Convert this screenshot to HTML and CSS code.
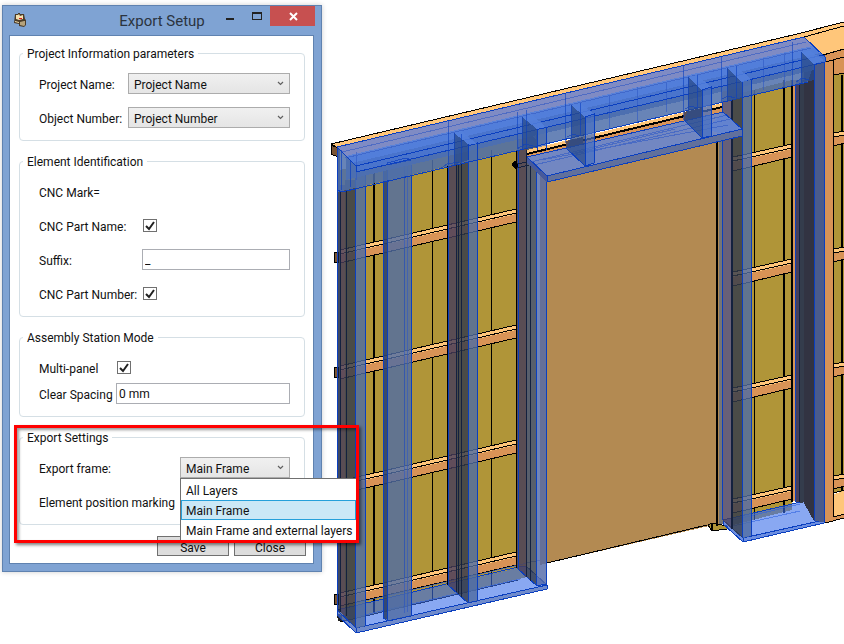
FILE: index.html
```
<!DOCTYPE html>
<html lang="en">
<head>
    <meta charset="UTF-8">
    <title>Export Setup</title>
    <link rel="stylesheet" href="styles.css">
</head>
<body>
    <main class="dialog">
        <header class="titlebar">
            <svg class="app-icon" viewBox="0 0 12 14" width="12" height="14">
                <path d="M1 1h3V0h2v1h4l1 5 1 1v5l-2 2-5-1v-2l-5-1z" fill="#4a3b28"/>
                <path d="M2 2h2l1-1 1 2 3-1v4l-4 1-3-1zM1 8l4 1v1L1 9z" fill="#f3dfae"/>
                <path d="M6 9l4-1h1v4l-1 1-4-1z" fill="#b5a27c"/>
                <path d="M5 5h3v1H5z" fill="#e01818"/>
            </svg>
            <h1>Export Setup</h1>
            <div class="window-controls">
                <button type="button" class="win-btn" aria-label="Minimize">
                    <svg viewBox="0 0 12 12" width="12" height="12"><path d="M2 8h8v2H2z" fill="#222"/></svg>
                </button>
                <button type="button" class="win-btn" aria-label="Maximize">
                    <svg viewBox="0 0 12 12" width="12" height="12"><path d="M1 2h10v8H1zM2 4v5h8V4z" fill="#222" fill-rule="evenodd"/></svg>
                </button>
                <button type="button" class="win-btn close" aria-label="Close window">
                    <svg viewBox="0 0 12 12" width="12" height="12"><path d="M3 3l7 7M10 3l-7 7" stroke="#fff" stroke-width="2"/></svg>
                </button>
            </div>
        </header>

        <form class="content">
            <fieldset class="project">
                <legend>Project Information parameters</legend>
                <div class="row">
                    <label for="projectName">Project Name:</label>
                    <select id="projectName"><option>Project Name</option></select>
                </div>
                <div class="row">
                    <label for="objectNumber">Object Number:</label>
                    <select id="objectNumber"><option>Project Number</option></select>
                </div>
            </fieldset>

            <fieldset class="element">
                <legend>Element Identification</legend>
                <div class="row"><span>CNC Mark=</span></div>
                <div class="row">
                    <label for="partName">CNC Part Name:</label>
                    <input type="checkbox" id="partName" checked>
                </div>
                <div class="row">
                    <label for="suffix">Suffix:</label>
                    <input type="text" id="suffix" value="_">
                </div>
                <div class="row">
                    <label for="partNumber">CNC Part Number:</label>
                    <input type="checkbox" id="partNumber" checked>
                </div>
            </fieldset>

            <fieldset class="assembly">
                <legend>Assembly Station Mode</legend>
                <div class="row">
                    <label for="multiPanel">Multi-panel</label>
                    <input type="checkbox" id="multiPanel" checked>
                </div>
                <div class="row">
                    <label for="clearSpacing">Clear Spacing</label>
                    <input type="text" id="clearSpacing" value="0 mm">
                </div>
            </fieldset>

            <div class="export-area">
                <fieldset class="export">
                    <legend>Export Settings</legend>
                    <div class="row">
                        <label for="exportFrame">Export frame:</label>
                        <div class="combo">
                            <select id="exportFrame"><option>Main Frame</option></select>
                            <ul class="menu" role="listbox">
                                <li role="option">All Layers</li>
                                <li role="option" class="selected" aria-selected="true">Main Frame</li>
                                <li role="option">Main Frame and external layers</li>
                            </ul>
                        </div>
                    </div>
                    <div class="row"><span>Element position marking</span></div>
                </fieldset>
                <div class="highlight"></div>
            </div>

            <div class="actions">
                <button type="button">Save</button>
                <button type="button">Close</button>
            </div>
        </form>
    </main>

    <svg class="model" viewBox="330 0 514 644" role="img" aria-label="Wall frame model">
        <defs>
            <g id="batten">
                <path class="light" d="M340 250L516 209V214L340 255z"/>
                <path class="wood" d="M340 255L516 214V222L340 263z"/>
                <path class="ink" d="M340 250L516 209M340 254L516 213M340 263L516 222"/>
            </g>
            <g id="batten-r">
                <path class="light" d="M733 157L792 144V149L733 162z"/>
                <path class="wood" d="M733 162L792 149V157L733 171z"/>
                <path class="ink" d="M733 157L792 144M733 161L792 148M733 171L792 157"/>
            </g>
            <g id="batten-far">
                <path class="light" d="M834 133L844 131V135L834 137z"/>
                <path class="wood" d="M834 137L844 135V143L834 146z"/>
                <path class="ink" d="M834 133L844 131M834 137L844 135M834 146L844 143"/>
            </g>
        </defs>

        <!-- left wall sheathing -->
        <path class="sheath" d="M340 170L527 130V577L340 622z"/>
        <path class="ink thick" d="M374 170V613"/>
        <path class="ink" d="M404 170V607M432 160V600M491 150V587M340 622L518 580"/>
        <use href="#batten"/>
        <use href="#batten" y="116"/>
        <use href="#batten" y="231"/>
        <use href="#batten" y="343"/>
        <path class="nub" d="M334 252h4v10h-4zM334 367h4v10h-4zM334 594h4v10h-4z"/>
        <path d="M337 614l5 1v6h-4z" fill="#222"/>

        <!-- door panel -->
        <path class="panel" d="M540 150L722 110V523L540 565z"/>
        <path class="ink" d="M547 563L707 525"/>
        <path class="sheath outlined" d="M708 525L712 523L727 526V529L712 531z"/>
        <path class="ink thick" d="M712 524V531M717 130V526"/>
        <path d="M719 132h4v392h-4z" fill="#757575"/>

        <!-- right wall sheathing -->
        <path class="sheath" d="M733 95L792 80V510L733 525z"/>
        <path class="ink" d="M754 90V520"/>
        <path class="ink thick" d="M784 80V513"/>
        <use href="#batten-r"/>
        <use href="#batten-r" y="115"/>
        <use href="#batten-r" y="231"/>
        <use href="#batten-r" y="342"/>
        <path class="ink thick" d="M792 80V502"/>
        <path class="wood" d="M793 80h3v421h-3z"/>

        <!-- far right wall -->
        <path class="sheath" d="M834 70h10v422h-10z"/>
        <path class="ink thick" d="M842 75V490"/>
        <use href="#batten-far"/>
        <use href="#batten-far" y="116"/>
        <use href="#batten-far" y="231"/>
        <use href="#batten-far" y="343"/>
        <path class="light" d="M834 494L844 491V514L834 517z"/>
        <path class="wood" d="M823 55L844 49V73L834 75V517L844 514V518L825 523z"/>
        <path class="ink" d="M833 60V517M834 75L844 73M825 62L844 57M834 493L844 490M834 517L844 514M825 523L844 518"/>
        <path class="light outlined" d="M804 37L844 26V49L823 55z"/>

        <!-- top cap -->
        <path class="light outlined" d="M331 144L797 34L844 22V26L804 37L338 148z"/>
        <path class="nub" d="M331 145L338 148V157L331 154z"/>

        <!-- bottom plates -->
        <path class="plate" d="M337 610L526 566L547 585V589L356 633L337 615z"/>
        <path class="plate-edge" d="M337 610L356 628L547 585V589L356 633L337 615zM723 520L743 538L824 520V523L743 542L723 524z"/>
        <path class="blue" d="M337 610L518 567L526 566L547 585L356 628zM337 610V615L356 633L547 589V585M356 628V633"/>
        <path class="hidden" d="M356 603L540 560M360 616L520 579"/>
        <path class="plate" d="M723 520L805 501L824 520V523L743 542L723 524z"/>
        <path class="blue" d="M723 520L805 501L824 520L743 538zM723 520V524L743 542L824 523V520M743 538V542"/>
        <path class="hidden" d="M733 526L800 511M733 520L800 504"/>

        <!-- left end stud -->
        <g class="stud">
            <path class="navy" d="M337 150H340V612L337 610z"/>
            <path class="umber" d="M340 185H345V616L340 612z"/>
            <path class="slate-dark" d="M345 180H356V628L345 617z"/>
            <path class="slate" d="M356 170H366V626L356 628z"/>
        </g>
        <path class="blue" d="M337 148V610M355 166V628M365 170V626"/>
        <path class="navy-line" d="M340 192V612M346 190V616"/>

        <!-- loose stud -->
        <path class="slate stud" d="M383 163L411 160V616L388 621L383 618z"/>
        <path class="navy" d="M384 165h3v454h-3z" opacity="0.500"/>
        <path class="blue" d="M383 163V618L388 621L411 616V160M387 165V620"/>
        <path class="faint" d="M404 165V613M407 165V612"/>

        <!-- middle stud -->
        <g class="stud">
            <path class="umber" d="M448 130H456V592L448 585z"/>
            <path class="slate-dark" d="M456 130L468 144V603L456 592z"/>
            <path class="slate" d="M468 144H477V601L468 603z"/>
        </g>
        <path class="blue" d="M448 130V585L468 603L477 601V142M468 144V603"/>
        <path class="navy-line" d="M456 130V592M458 160V594M461 160V597"/>
        <path class="ink" d="M447 165V585"/>

        <!-- door left stud -->
        <g class="stud">
            <path class="umber" d="M517 130H526V577L517 569z"/>
            <path class="slate-dark" d="M526 130L537 140V586L526 577z"/>
            <path class="violet" d="M537 130H547V584L537 586z"/>
        </g>
        <path class="blue" d="M518 130V569L537 586L546 584V127M536 128V586"/>
        <path class="navy-line" d="M526 150V577M530 158V581"/>
        <path class="ink" d="M516 151V568"/>

        <!-- door right stud -->
        <g class="stud">
            <path class="umber" d="M722 85H732V529L722 520z"/>
            <path class="slate-dark" d="M732 85H743V538L732 529z"/>
            <path class="slate" d="M743 82H751V536L743 538z"/>
        </g>
        <path class="blue" d="M722 100V520M742 82V538M751 79V536"/>
        <path class="navy-line thick" d="M732 100V529"/>

        <!-- right end stud -->
        <path class="umber" d="M796 80H800V502H796z"/>
        <path class="slate-dark" d="M800 80H805V502L800 503z"/>
        <path d="M804 60L814 64V521L804 503z" fill="#323342"/>
        <path d="M814 64L824 60V522L814 521z" fill="#4b5b8b"/>
        <path class="blue" d="M795 84V502M814 64V521M824 55V522"/>
        <path class="navy-line" d="M799 84V502"/>

        <!-- gap above the door -->
        <path class="light" d="M527 150L722 103V108L527 155z"/>
        <path class="wood" d="M527 155L722 108V116L527 162z"/>
        <path class="ink thick" d="M527 154L722 107"/>
        <path d="M566 141L583 137V147L566 151zM684 112L702 108V117L684 121z" fill="#5a4d55"/>
        <path d="M512 163l3-2 3 2v5l-3 1-3-3z"/>
        <path class="navy-line" d="M517 164l10-2M517 168l12-3"/>

        <!-- door header plate -->
        <path class="header-plate" d="M527 157L723 112L742 129L547 176z"/>
        <path d="M547 176L742 129V136L547 182z" fill="#61709c"/>
        <path d="M527 157L547 176V182L527 163z" fill="#46599b"/>
        <path class="beam-hi" d="M723 112L742 129L722 134L706 129z" opacity="0.600"/>
        <path class="faint" d="M531 162L727 115M534 165L730 119M541 160L728 125M575 153L675 129"/>
        <path class="blue" d="M527 157L723 112L742 129L547 176zM547 182L742 136V129M547 176V182"/>

        <!-- top header beam -->
        <path class="beam-top" d="M337 147L804 37L823 55L356 166z"/>
        <path class="beam-mid" d="M346 158L814 48L825 57V62L814 64V70L346 180z"/>
        <path class="beam-hi" d="M346 156L812 46L820 53L352 163z"/>
        <path class="beam-low" d="M337 148L356 166V172L814 64L808 82L338 192z"/>
        <path class="faint" d="M342 152L806 42M345 158L811 48M356 152V180M609 95V128M637 87V122M666 82V112M763 58V90M784 53V85"/>
        <path class="blue" d="M337 147L804 37L823 55L356 166zM356 172L825 62M342 192L808 82M337 148V190L342 192M356 166V172M804 37L825 57V62"/>
        <path class="blue" d="M341 150V190M350 160V187M387 163L406 158L411 160L387 165z" opacity="0.700"/>

        <!-- studs seen through the beam -->
        <path class="shade" d="M454 133L468 144V160L454 165zM522 117L537 129V146L522 149zM571 105L585 117V134L571 138zM688 77L702 90V107L688 110zM727 68L742 82V98L727 101zM801 52L814 64V80L801 83z"/>
        <path class="beam-hi" d="M454 133L461 131L477 144H468zM522 117L531 114L546 127L537 129zM571 105L580 103L594 114L585 117zM688 77L697 75L711 87L702 90zM727 68L736 66L751 79L742 82zM801 52L810 51L824 60L814 64z"/>
        <g class="seen-through">
            <path class="blue" d="M448 121V165M454 133V165M461 134V164M517 112V149M522 117V149M526 110V148M565 93V143M571 105V140M580 103V135M683 65V120M688 77V112M697 75V110M721 56V102M727 68V101M736 66V98M792 42V85M801 52V83"/>
            <path class="blue" d="M439 170l8-6 12-2M517 149l8-5 8 2M567 137l6-3 6 2M685 109l6-3 6 2M722 99l6-3 7 2M796 82l6-4 7 2"/>
        </g>
        <path class="blue" d="M468 144V160M477 142V160M537 129V150M546 127V150M742 82V98M751 79V96"/>

        <!-- cripple studs over the door -->
        <path class="shade" d="M571 138L585 134V166L566 148zM688 110L702 107V138L684 120z"/>
        <path class="cripple" d="M585 117L594 114V163L585 166zM702 90L711 87V136L702 138z"/>
        <path class="blue" d="M585 117L594 114V163L585 166zM702 90L711 87V136L702 138zM566 148L585 166M684 120L702 138"/>
    </svg>
</body>
</html>
```
FILE: styles.css
```
* {
    box-sizing: border-box;
}

body {
    margin: 0;
    display: flex;
    align-items: flex-start;
    background: #fff;
    font-family: Roboto, "Open Sans", sans-serif;
    font-size: 12px;
    line-height: 18px;
    color: #111;
}

/* dialog window */
.dialog {
    flex: 0 0 320px;
    margin: 5px 8px 0 2px;
    padding-bottom: 7px;
    background: #7fa3d3;
    border: 1px solid #5f82b0;
    box-shadow: 0 0 5px rgba(0, 0, 0, 0.2);
}

.titlebar {
    display: grid;
    grid-template-columns: 1fr auto 1fr;
    height: 29px;
}

.app-icon {
    margin: 7px 0 0 11px;
}

.titlebar h1 {
    margin: 5px 0 0;
    font-size: 15px;
    font-weight: normal;
    line-height: 20px;
    color: #2b3440;
}

.window-controls {
    display: flex;
    justify-content: flex-end;
    align-items: flex-start;
    margin-right: 6px;
}

.win-btn {
    display: flex;
    align-items: center;
    justify-content: center;
    width: 27px;
    height: 20px;
    padding: 0;
    border: none;
    background: none;
}

.win-btn.close {
    width: 45px;
    background: #c75050;
}

.content {
    display: flex;
    flex-direction: column;
    gap: 11px;
    margin: 0 7px 0 6px;
    padding: 8px 8px 7px 9px;
    background: #fff;
    border: 1px solid #5f82b0;
}

fieldset {
    margin: 0;
    min-width: 0;
    padding: 11px 14px 12px 19px;
    border: 1px solid #d5dfe5;
    border-radius: 4px;
}

legend {
    margin-left: -16px;
    padding: 2px 4px 0;
    line-height: 16px;
}

.row {
    display: grid;
    grid-template-columns: 89px 1fr;
    align-items: center;
    height: 21px;
    margin-bottom: 13px;
    white-space: nowrap;
}

.row:last-child {
    margin-bottom: 0;
}

.row > label,
.row > span {
    padding-top: 2px;
}

.element .row {
    grid-template-columns: 103px 1fr;
}

.assembly .row {
    grid-template-columns: 77px 1fr;
}

.assembly .row:nth-of-type(1) {
    margin-bottom: 5px;
}

.export .row {
    grid-template-columns: 141px 1fr;
}

/* controls */
select,
input,
button {
    font: inherit;
    color: inherit;
}

select {
    appearance: none;
    display: block;
    width: 100%;
    height: 21px;
    padding: 2px 5px 0;
    border: 1px solid #acacac;
    border-radius: 0;
    background: url("data:image/svg+xml,%3Csvg xmlns='http://www.w3.org/2000/svg' width='7' height='5'%3E%3Cpath d='M1 1l2.500 2.500L6 1' fill='none' stroke='%23606060' stroke-width='1.200'/%3E%3C/svg%3E") no-repeat right 5px center, linear-gradient(#f0f0f0, #e5e5e5);
}

input[type="text"] {
    width: 100%;
    height: 21px;
    padding: 0 2px;
    border: 1px solid #abadb3;
    background: #fff;
}

input[type="checkbox"] {
    appearance: none;
    width: 14px;
    height: 13px;
    margin: 0 0 0 1px;
    border: 1px solid #707070;
    background: #fff url("data:image/svg+xml,%3Csvg xmlns='http://www.w3.org/2000/svg' width='10' height='10'%3E%3Cpath d='M1 5l3 3 5-7' fill='none' stroke='%23212121' stroke-width='2'/%3E%3C/svg%3E") no-repeat center;
}

.actions {
    display: flex;
    justify-content: flex-end;
    gap: 5px;
    margin-right: -1px;
}

.actions button {
    width: 72px;
    height: 20px;
    padding: 2px 0 0;
    border: 1px solid #707070;
    background: #ddd;
}

/* open drop-down */
.combo {
    position: relative;
}

.menu {
    position: absolute;
    z-index: 1;
    top: 100%;
    left: 0;
    width: 177px;
    margin: 0;
    padding: 1px 0;
    list-style: none;
    background: #fff;
    border: 1px solid #707070;
}

.menu li {
    height: 20px;
    padding: 1px 4px;
    border: 1px solid transparent;
}

.menu .selected {
    background: #cbe8f6;
    border-color: #26a0da;
}

.export-area {
    position: relative;
}

.highlight {
    position: absolute;
    z-index: 2;
    inset: -3px -54px -18px -5px;
    border: 3px solid #f00;
    box-shadow: 2px 2px 3px rgba(0, 0, 0, 0.5), inset 2px 2px 3px rgba(0, 0, 0, 0.4);
    pointer-events: none;
}

/* wall model */
.model {
    flex: 1;
    min-width: 0;
    height: auto;
    shape-rendering: crispEdges;
}

.sheath { fill: #b09538; }
.light { fill: #ffc67a; }
.wood { fill: #d89356; }
.panel { fill: #b38a52; }
.nub { fill: #7a5434; stroke: #000; }
.outlined { stroke: #000; }
.plate { fill: #3b6eea; fill-opacity: 0.6; }
.plate-edge { fill: #4a5f90; fill-opacity: 0.4; }
.stud { opacity: 0.82; }
.navy { fill: #14213f; }
.umber { fill: #473e5b; }
.slate-dark { fill: #343c4c; }
.slate { fill: #506da2; }
.violet { fill: #546ba9; }
.header-plate { fill: #7287c2; }
.beam-top { fill: #7f8bc4; }
.beam-hi { fill: #5480dc; fill-opacity: 0.85; }
.beam-mid { fill: #4a74cc; }
.beam-low { fill: #4d6eaa; fill-opacity: 0.85; }
.shade { fill: #2b4c8c; fill-opacity: 0.75; }
.cripple { fill: #4a70c0; fill-opacity: 0.75; }
.seen-through { opacity: 0.6; }

.ink { fill: none; stroke: #000; }
.thick { stroke-width: 2; }
.blue { fill: none; stroke: #0a3fc0; }
.navy-line { fill: none; stroke: #14213f; }
.faint { fill: none; stroke: #2f58c4; stroke-opacity: 0.6; }
.hidden { fill: none; stroke: #2f62e0; stroke-opacity: 0.6; }
```
